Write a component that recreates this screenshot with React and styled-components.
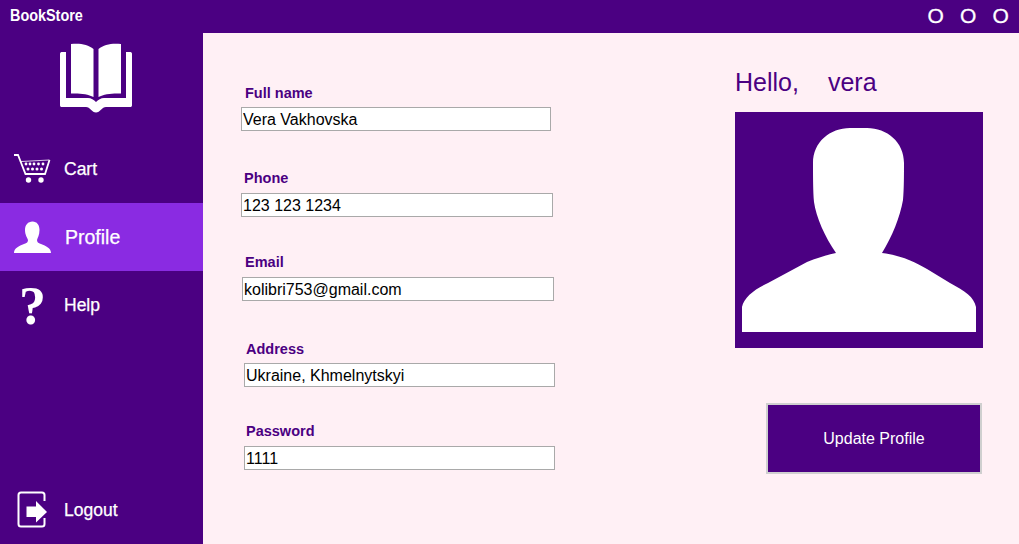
import React from 'react';
import styled, { createGlobalStyle } from 'styled-components';

const indigo = '#4b0082';

const GlobalStyle = createGlobalStyle`
  html, body {
    margin: 0;
    height: 100%;
    overflow: hidden;
    background: #fff0f5;
  }
  * {
    box-sizing: border-box;
  }
`;

const Page = styled.div`
  width: 1019px;
  height: 544px;
  display: flex;
  flex-direction: column;
  font-family: 'Liberation Sans', Arial, sans-serif;
`;

const TitleBar = styled.header`
  height: 33px;
  flex: none;
  background: ${indigo};
  display: flex;
  align-items: center;
  justify-content: space-between;
  padding: 0 10px;
  color: #fff;
`;

const AppName = styled.span`
  font-size: 16px;
  font-weight: 700;
  transform: scaleX(0.9);
  transform-origin: left center;
  margin-top: -2px;
`;

const WindowButtons = styled.div`
  display: flex;
  gap: 17px;
  margin-right: 1px;
  margin-top: -2px;
`;

const WindowButton = styled.span`
  width: 15.5px;
  font-size: 21px;
  line-height: 24px;
  text-align: center;
  -webkit-text-stroke: 0.3px #fff;
`;

const Body = styled.div`
  flex: 1;
  display: flex;
  min-height: 0;
`;

const Sidebar = styled.nav`
  width: 203px;
  flex: none;
  background: ${indigo};
  display: flex;
  flex-direction: column;
`;

const Logo = styled.div`
  height: 102px;
  flex: none;
  padding: 10px 0 0 60px;
`;

const NavItem = styled.a`
  height: 68px;
  flex: none;
  display: flex;
  align-items: center;
  color: #fff;
  font-size: ${({ $active }) => ($active ? '19.5px' : '17.5px')};
  background: ${({ $active }) => ($active ? '#8a2be2' : 'transparent')};
  -webkit-text-stroke: 0.25px #fff;
  margin-top: ${({ $bottom }) => ($bottom ? 'auto' : '0')};
`;

const IconSlot = styled.span`
  width: 65px;
  flex: none;
  display: flex;
  justify-content: center;
  align-items: center;
`;

const NavLabel = styled.span`
  margin-left: ${({ $active }) => ($active ? '0' : '-1px')};
`;

const QuestionMark = styled.span`
  font-family: 'Liberation Serif', serif;
  font-weight: 700;
  font-size: 54px;
  line-height: 54px;
  -webkit-text-stroke: 0;
  margin-top: 2px;
`;

const Main = styled.main`
  flex: 1;
  display: flex;
  background: #fff0f5;
`;

const Form = styled.form`
  width: 532px;
  flex: none;
  display: flex;
  flex-direction: column;
`;

const Field = styled.div`
  display: flex;
  flex-direction: column;
  width: ${({ $width }) => $width}px;
  margin-top: ${({ $top }) => $top}px;
  margin-left: ${({ $left }) => $left}px;
`;

const Label = styled.label`
  font-size: 14.5px;
  font-weight: 700;
  line-height: 18px;
  color: ${indigo};
  margin: 0 0 ${({ $gap }) => $gap}px ${({ $indent }) => $indent}px;
`;

const Input = styled.input`
  width: 100%;
  height: 24px;
  border: 1px solid #a9a9a9;
  padding: 1px 1px 0;
  background: #fff;
  color: #000;
  font-family: inherit;
  font-size: 16px;
  outline: none;
`;

const Side = styled.aside`
  display: flex;
  flex-direction: column;
  align-items: flex-start;
  padding-top: 34px;
`;

const Greeting = styled.h1`
  margin: 0;
  font-size: 25px;
  font-weight: 400;
  line-height: 30px;
  color: ${indigo};
`;

const UserName = styled.span`
  margin-left: 29px;
`;

const Avatar = styled.svg`
  display: block;
  width: 248px;
  height: 236px;
  margin-top: 15px;
  background: ${indigo};
`;

const UpdateButton = styled.button`
  width: 216px;
  height: 71px;
  margin: 55px 0 0 31px;
  border: 2px solid #cfcfcf;
  background: ${indigo};
  color: #fff;
  font-family: inherit;
  font-size: 16px;
`;

const BookIcon = () => (
  <svg width="73" height="70" viewBox="60 43 73 70" fill="#fff">
    <path d="M71 44C79 43 88 44 93.500 49V97C88 94 79 93 71 93.500Z" />
    <path d="M121 44C113 43 104 44 98.500 49V97C104 94 113 93 121 93.500Z" />
    <path d="M61.500 52H66V98H88C91 98 94 100 96 102C98 100 101 98 104 98H126V52H130.500C131.500 52 132 53 132 54V105C132 106.500 131.500 107 130 107H106C102 107 100 112.500 96 112.500C92 112.500 90 107 86 107H62C60.500 107 60 106.500 60 105V54C60 53 60.500 52 61.500 52Z" />
  </svg>
);

const CartIcon = () => (
  <svg width="37" height="30" viewBox="15 155 37 30">
    <path
      d="M15 156H19L26.500 175H46L50.500 161"
      fill="none"
      stroke="#fff"
      strokeWidth="1.800"
    />
    <path d="M22 162.500L50.500 161" fill="none" stroke="#fff" strokeWidth="0.800" />
    <g fill="#fff">
      <circle cx="29.500" cy="181" r="2.700" />
      <circle cx="42" cy="181" r="2.700" />
      <circle cx="27" cy="165" r="1.400" />
      <circle cx="31" cy="165" r="1.400" />
      <circle cx="35" cy="165" r="1.400" />
      <circle cx="39.500" cy="165" r="1.400" />
      <circle cx="44" cy="165" r="1.400" />
      <circle cx="29" cy="170" r="1.500" />
      <circle cx="33.500" cy="170" r="1.500" />
      <circle cx="38" cy="170" r="1.500" />
      <circle cx="42.500" cy="170" r="1.500" />
    </g>
  </svg>
);

const PersonIcon = () => (
  <svg width="37" height="33" viewBox="14 221 37 33" fill="#fff">
    <path d="M32.500 221.500C37 221.500 39.500 225 39.500 230C39.500 235 37.500 238 37 240C37 242 38 243 41 244C46 246 51 248 51 253H14C14 248 19 246 24 244C27 243 28 242 28 240C27.500 238 25 235 25 230C25 225 28 221.500 32.500 221.500Z" />
  </svg>
);

const LogoutIcon = () => (
  <svg width="31" height="38" viewBox="17 492 31 38">
    <path
      d="M44.500 502V496C44.500 494.500 44 493.500 42 493.500H21C19.300 493.500 18.500 494.500 18.500 496V525C18.500 526.800 19.300 527.500 21 527.500H42C44 527.500 44.500 526.800 44.500 525V519"
      fill="none"
      stroke="#fff"
      strokeWidth="2"
    />
    <path d="M26.500 507.500H36V502L47 513L36 523.500V518H26.500Z" fill="#fff" />
  </svg>
);

const fields = [
  { label: 'Full name', value: 'Vera Vakhovska', top: 51, left: 38, width: 310, indent: 4, gap: 5 },
  { label: 'Phone', value: '123 123 1234', top: 38, left: 38, width: 312, indent: 3, gap: 6 },
  { label: 'Email', value: 'kolibri753@gmail.com', top: 36, left: 39, width: 312, indent: 3, gap: 6 },
  { label: 'Address', value: 'Ukraine, Khmelnytskyi', top: 39, left: 41, width: 311, indent: 2, gap: 5 },
  { label: 'Password', value: '1111', top: 35, left: 41, width: 311, indent: 2, gap: 6 },
];

const App = () => (
  <Page>
    <GlobalStyle />
    <TitleBar>
      <AppName>BookStore</AppName>
      <WindowButtons>
        <WindowButton>O</WindowButton>
        <WindowButton>O</WindowButton>
        <WindowButton>O</WindowButton>
      </WindowButtons>
    </TitleBar>
    <Body>
      <Sidebar>
        <Logo>
          <BookIcon />
        </Logo>
        <NavItem>
          <IconSlot>
            <CartIcon />
          </IconSlot>
          <NavLabel>Cart</NavLabel>
        </NavItem>
        <NavItem $active>
          <IconSlot>
            <PersonIcon />
          </IconSlot>
          <NavLabel $active>Profile</NavLabel>
        </NavItem>
        <NavItem>
          <IconSlot>
            <QuestionMark>?</QuestionMark>
          </IconSlot>
          <NavLabel>Help</NavLabel>
        </NavItem>
        <NavItem $bottom>
          <IconSlot>
            <LogoutIcon />
          </IconSlot>
          <NavLabel>Logout</NavLabel>
        </NavItem>
      </Sidebar>
      <Main>
        <Form>
          {fields.map(field => (
            <Field
              key={field.label}
              $top={field.top}
              $left={field.left}
              $width={field.width}
            >
              <Label $indent={field.indent} $gap={field.gap}>
                {field.label}
              </Label>
              <Input defaultValue={field.value} />
            </Field>
          ))}
        </Form>
        <Side>
          <Greeting>
            Hello,<UserName>vera</UserName>
          </Greeting>
          <Avatar viewBox="0 0 248 236">
            <path
              d="M101 141C90 125 81 105 79 90C78 80 78 60 78 51C78 30 95 16 115 16H132C152 16 169 30 169 51C169 62 169 78 168 88C165 105 157 125 147 141C165 143 180 150 192 157L215 171C230 179 239 185 241 195V220H7V195C9 185 20 177 33 171L72 150C82 146 92 143 101 141Z"
              fill="#fff"
            />
          </Avatar>
          <UpdateButton type="button">Update Profile</UpdateButton>
        </Side>
      </Main>
    </Body>
  </Page>
);

export default App;
